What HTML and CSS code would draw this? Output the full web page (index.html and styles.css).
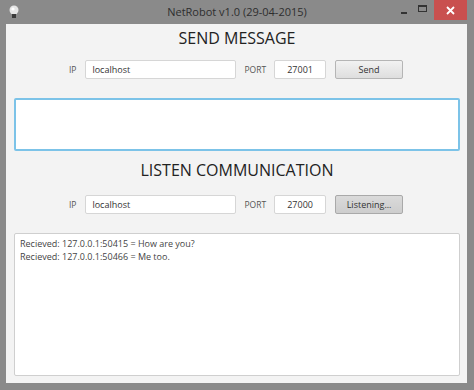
FILE: index.html
```html
<!DOCTYPE html>
<html lang="en">
<head>
    <meta charset="utf-8" />
    <title>NetRobot v1.0</title>
    <meta name="viewport" content="width=device-width, initial-scale=1.0">
    <link rel="stylesheet" href="styles.css">
</head>
<body>

<div class="window">
    <div class="titlebar">
        <svg class="app-icon" width="12" height="16" viewBox="0 0 12 16">
            <circle cx="6" cy="6" r="4.5" fill="#e6e6e6" />
            <circle cx="5" cy="5" r="1.6" fill="#ffffff" />
            <rect x="4" y="10" width="4" height="4" fill="#3a3a3a" />
        </svg>
        <div class="title">NetRobot v1.0 (29-04-2015)</div>
        <div class="controls">
            <span class="ctl-min"></span>
            <span class="ctl-max"></span>
            <span class="ctl-close">
                <svg width="9" height="9" viewBox="0 0 9 9">
                    <path d="M1 1 L8 8 M8 1 L1 8" stroke="#fff" stroke-width="1.8" />
                </svg>
            </span>
        </div>
    </div>

    <div class="panel">
        <h1 class="heading heading-send">SEND MESSAGE</h1>
        <div class="conn-row">
            <span class="label label-ip">IP</span>
            <div class="field field-ip">localhost</div>
            <span class="label label-port">PORT</span>
            <div class="field field-port">27001</div>
            <div class="btn">Send</div>
        </div>

        <div class="message-box"></div>

        <h1 class="heading heading-listen">LISTEN COMMUNICATION</h1>
        <div class="conn-row conn-row-listen">
            <span class="label label-ip">IP</span>
            <div class="field field-ip">localhost</div>
            <span class="label label-port">PORT</span>
            <div class="field field-port">27000</div>
            <div class="btn btn-active">Listening...</div>
        </div>

        <div class="log">
            <div>Recieved: 127.0.0.1:50415 = How are you?</div>
            <div>Recieved: 127.0.0.1:50466 = Me too.</div>
        </div>
    </div>
</div>

</body>
</html>
```

FILE: styles.css
```css
* {
    margin: 0;
    padding: 0;
    box-sizing: border-box;
}

body {
    font-family: "Open Sans", "Noto Sans", sans-serif;
    background-color: #8a8a8a;
    width: 474px;
    height: 390px;
    overflow: hidden;
}

.window {
    display: flex;
    flex-direction: column;
    height: 390px;
}

/* title bar */
.titlebar {
    height: 24px;
    display: flex;
    align-items: flex-start;
    position: relative;
}

.app-icon {
    margin: 4px 0 0 8px;
}

.title {
    position: absolute;
    left: 0;
    right: 0;
    top: 3px;
    text-align: center;
    font-size: 11px;
    line-height: 17px;
    color: #2e2e2e;
}

.controls {
    margin-left: auto;
    margin-right: 7px;
    display: flex;
    align-items: flex-start;
    position: relative;
    flex: none;
}

.ctl-min {
    flex: none;
    width: 6px;
    height: 2px;
    background: #333;
    margin: 12px 11px 0 0;
}

.ctl-max {
    flex: none;
    width: 9px;
    height: 7px;
    border: 1px solid #333;
    border-top-width: 2px;
    margin: 5px 7px 0 0;
}

.ctl-close {
    flex: none;
    width: 33px;
    height: 20px;
    background: #c9504f;
    display: flex;
    align-items: center;
    justify-content: center;
}

/* content */
.panel {
    flex: 1;
    margin: 0 7px 7px 6px;
    background: #f3f3f3;
    display: flex;
    flex-direction: column;
    padding: 3px 7px 7px 8px;
}

.heading {
    font-weight: normal;
    font-size: 16px;
    line-height: 22px;
    color: #222;
    text-align: center;
}

.heading-listen {
    margin-top: 8px;
}

.conn-row {
    display: flex;
    justify-content: center;
    align-items: center;
    height: 19px;
    margin-top: 11px;
    padding-right: 2px;
}

.conn-row-listen {
    margin-top: 14px;
}

.label {
    font-size: 8.5px;
    color: #555;
}

.label-ip {
    margin-right: 9px;
}

.label-port {
    margin: 0 8px 0 8px;
}

.field {
    height: 19px;
    background: #fff;
    border: 1px solid #d6d6d6;
    border-radius: 2px;
    font-size: 9px;
    line-height: 17px;
    color: #333;
}

.field-ip {
    width: 151px;
    padding-left: 6px;
}

.field-port {
    width: 52px;
    text-align: center;
}

.btn {
    width: 68px;
    height: 19px;
    margin-left: 9px;
    border: 1px solid #b5b5b5;
    border-radius: 2px;
    background: linear-gradient(#f2f2f2, #dedede);
    font-size: 9px;
    line-height: 17px;
    text-align: center;
    color: #333;
}

.btn-active {
    background: linear-gradient(#dadada, #cdcdcd);
    border-color: #a9a9a9;
}

.message-box {
    height: 53px;
    margin-top: 19px;
    background: #fff;
    border: 2px solid #7cc3e8;
    border-radius: 2px;
}

.log {
    flex: 1;
    margin-top: 19px;
    background: #fff;
    border: 1px solid #cfcfcf;
    border-radius: 2px;
    padding: 3px 5px;
    font-size: 9px;
    line-height: 13px;
    color: #444;
}
```
